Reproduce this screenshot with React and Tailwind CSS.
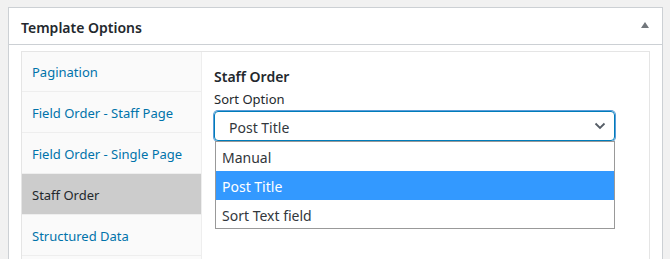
import React from "react";

const font = { fontFamily: '"Noto Sans", "Open Sans", sans-serif' };

function Tab({ label, active, first }) {
  return (
    <div
      className={
        (first ? "h-[40px] " : "h-[41px] ") +
        "border-b border-[#eeeeee] pl-[10px] pt-[3px] flex items-center text-[13px] " +
        (active ? "bg-[#cccccc] text-[#23282d]" : "text-[#0073aa]")
      }
    >
      {label}
    </div>
  );
}

export default function App() {
  return (
    <div className="w-[670px] h-[259px] overflow-hidden bg-[#f1f1f1] pl-[8px] pr-[7px] pt-[7px]" style={font}>
      <div className="bg-white border border-[#ccd0d4] h-[300px]">
        <div className="h-[37px] border-b border-[#ccd0d4] flex items-center justify-between pl-[12px] pr-[13px]">
          <span className="text-[14px] font-semibold text-[#23282d] pt-[2px]">Template Options</span>
          <svg width="8" height="6" viewBox="0 0 8 6" className="mt-[-2px]">
            <polygon points="4,0 8,6 0,6" fill="#72777c" />
          </svg>
        </div>
        <div className="pt-[6px] px-[12px]">
          <div className="border border-[#e5e5e5] flex h-[260px]">
            <div className="w-[180px] bg-[#fafafa] border-r border-[#eeeeee] shrink-0">
              <Tab label="Pagination" first />
              <Tab label="Field Order - Staff Page" />
              <Tab label="Field Order - Single Page" />
              <Tab label="Staff Order" active />
              <Tab label="Structured Data" />
            </div>
            <div className="flex-1 pl-[12px] pt-[15px]">
              <div className="text-[14px] font-semibold text-[#23282d] leading-[20px]">Staff Order</div>
              <div className="text-[13px] text-[#23282d] leading-[18px] mt-[3px]">Sort Option</div>
              <div className="relative mt-[3px] w-[401px]">
                <div className="h-[30px] border border-[#007cba] rounded-[4px] shadow-[0_0_0_1px_#5b9dd9] flex items-center justify-between pl-[14px] pr-[8px] pt-[2px] text-[14px] text-[#32373c]">
                  <span>Post Title</span>
                  <svg width="12" height="8" viewBox="0 0 12 8" className="mt-[-2px]">
                    <polyline points="1.5,1.5 6,6 10.5,1.5" fill="none" stroke="#555d66" strokeWidth="1.8" />
                  </svg>
                </div>
                <div className="absolute left-[1px] top-[30px] w-[400px] bg-white border border-[#999999] text-[14px]">
                  <div className="h-[29px] flex items-center pl-[6px] pt-[2px] text-[#32373c]">Manual</div>
                  <div className="h-[29px] flex items-center pl-[6px] pt-[2px] bg-[#3399ff] text-white">Post Title</div>
                  <div className="h-[28px] flex items-center pl-[6px] pt-[2px] text-[#32373c]">Sort Text field</div>
                </div>
              </div>
            </div>
          </div>
        </div>
      </div>
    </div>
  );
}
